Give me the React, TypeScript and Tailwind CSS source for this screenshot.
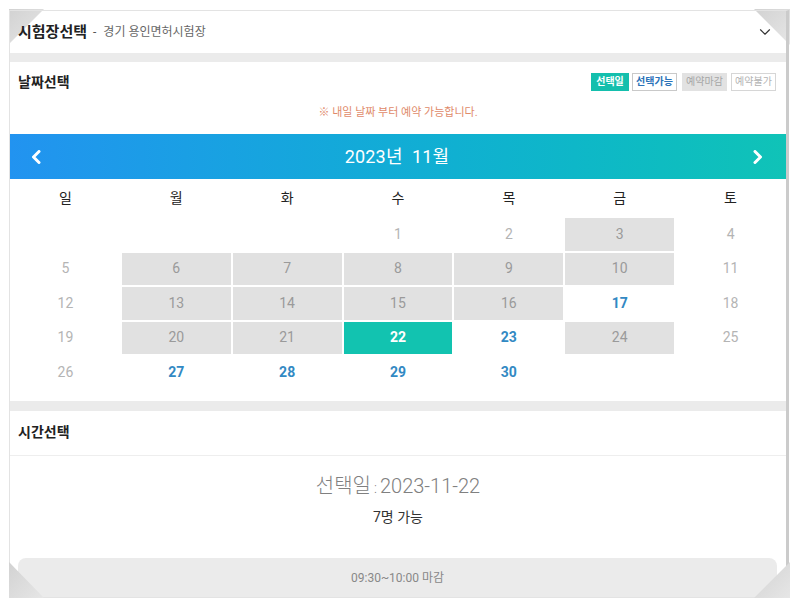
import { ChevronDown } from "lucide-react";

const FONT = "font-['Roboto','Noto_Sans_CJK_KR',sans-serif]";

type DayKind = "empty" | "off" | "closed" | "open" | "selected";

interface Day {
  n?: number;
  kind: DayKind;
}

const weekdays = ["일", "월", "화", "수", "목", "금", "토"];

const closed = [3, 6, 7, 8, 9, 10, 13, 14, 15, 16, 20, 21, 24];
const open = [17, 23, 27, 28, 29, 30];

function buildDays(): Day[] {
  const days: Day[] = [];
  for (let i = 0; i < 3; i++) days.push({ kind: "empty" });
  for (let n = 1; n <= 30; n++) {
    let kind: DayKind = "off";
    if (n === 22) kind = "selected";
    else if (closed.includes(n)) kind = "closed";
    else if (open.includes(n)) kind = "open";
    days.push({ n, kind });
  }
  while (days.length < 35) days.push({ kind: "empty" });
  return days;
}

function DayCell({ day }: { day: Day }) {
  const styles: Record<DayKind, string> = {
    empty: "",
    off: "text-[#b4b4b4]",
    closed: "bg-[#e1e1e1] text-[#9a9a9a]",
    open: "text-[#3289c3] font-bold",
    selected: "bg-[#12c3b0] text-white font-bold",
  };
  return (
    <div className="h-[34.5px] p-px">
      <div className={`h-full flex items-center justify-center text-[14px] ${styles[day.kind]}`}>
        {day.n}
      </div>
    </div>
  );
}

function Corner({ className, points }: { className: string; points: string }) {
  return (
    <svg className={`absolute ${className}`} width="36" height="36" viewBox="0 0 36 36">
      <defs>
        <linearGradient id="fold" x1="0" y1="0" x2="1" y2="1">
          <stop offset="0" stopColor="#d2d2d2" />
          <stop offset="1" stopColor="#e6e6e6" />
        </linearGradient>
      </defs>
      <polygon points={points} fill="url(#fold)" />
    </svg>
  );
}

export default function App() {
  const days = buildDays();

  return (
    <div className={`relative w-[800px] h-[603px] bg-white overflow-hidden ${FONT}`}>
      {/* folded corners behind the top edge */}
      <Corner className="left-[9px] top-[9px] z-0" points="0,0 35,0 0,35" />
      <Corner className="left-[754px] top-[9px] z-0" points="0,0 36,0 36,36" />

      <div className="relative z-10 pt-[10px] pl-[9px]">
        <div className="w-[780px] h-[588px] border-l border-t border-b border-[#e3e3e3] border-r-[3px] border-r-[#cbcbcb] overflow-hidden">
          {/* 시험장 */}
          <div className="h-[42px] flex items-center pl-[8px] pr-[12px]">
            <span className="text-[15px] font-bold text-[#222]">시험장선택</span>
            <span className="ml-[6px] text-[12px] text-[#555]">-</span>
            <span className="ml-[7px] text-[12px] text-[#666]">경기 용인면허시험장</span>
            <ChevronDown className="ml-auto" size={18} strokeWidth={1.5} color="#333" />
          </div>
          <div className="h-[9px] bg-[#ebebeb]" />

          {/* 날짜선택 */}
          <div className="pt-[11px]">
            <div className="flex items-center justify-between pl-[8px] pr-[10px] h-[18px]">
              <span className="text-[14px] font-bold text-[#222]">날짜선택</span>
              <div className="flex gap-[3px] text-[10px] leading-none">
                <span className="w-[38px] h-[18px] flex items-center justify-center bg-[#14bfad] text-white font-bold">선택일</span>
                <span className="w-[45px] h-[18px] flex items-center justify-center border border-[#c9c9c9] text-[#2a72b8] font-bold">선택가능</span>
                <span className="ml-[2px] w-[45px] h-[18px] flex items-center justify-center bg-[#e2e2e2] text-[#a6a6a6]">예약마감</span>
                <span className="ml-[1px] w-[45px] h-[18px] flex items-center justify-center border border-[#d6d6d6] text-[#b3b3b3]">예약불가</span>
              </div>
            </div>
            <p className="mt-[14px] text-center text-[11px] leading-[16px] text-[#e08a6a]">※ 내일 날짜 부터 예약 가능합니다.</p>

            <div className="mt-[13px] h-[45px] bg-linear-to-r from-[#2293f0] to-[#10c3b7] flex items-center justify-between pl-[20px] pr-[22px]">
              <svg width="12" height="14" viewBox="0 0 12 14">
                <polyline points="9,1.5 3.5,7 9,12.5" fill="none" stroke="white" strokeWidth="3" strokeLinejoin="round" strokeLinecap="round" />
              </svg>
              <span className="text-[18px] text-white tracking-[0.2px]">2023년&nbsp; 11월</span>
              <svg width="12" height="14" viewBox="0 0 12 14">
                <polyline points="3,1.5 8.5,7 3,12.5" fill="none" stroke="white" strokeWidth="3" strokeLinejoin="round" strokeLinecap="round" />
              </svg>
            </div>

            <div className="grid grid-cols-7 h-[38px] items-center">
              {weekdays.map((w) => (
                <div key={w} className="text-center text-[14px] text-[#222]">{w}</div>
              ))}
            </div>
            <div className="grid grid-cols-7 pb-[11px]">
              {days.map((d, i) => (
                <DayCell key={i} day={d} />
              ))}
            </div>
          </div>
          <div className="h-[10px] bg-[#ebebeb]" />

          {/* 시간선택 */}
          <div className="h-[45px] flex items-center pl-[8px] border-b border-[#eeeeee]">
            <span className="text-[14px] font-bold text-[#222]">시간선택</span>
          </div>
          <div className="flex flex-col items-center">
            <p className="mt-[16px] text-[20px] leading-[28px] font-light text-[#808080]">
              선택일<span className="text-[14px] mx-[3px]">:</span>2023-11-22
            </p>
            <p className="mt-[5px] text-[14px] leading-[20px] font-normal text-[#333]">7명 가능</p>
          </div>
          <div className="mt-[31px] ml-[8px] mr-[9px] h-[40px] rounded-[8px] bg-[#ebebeb] flex items-center justify-center text-[12px] text-[#888]">
            09:30~10:00 마감
          </div>
        </div>
      </div>

      {/* folded corners over the bottom edge */}
      <Corner className="left-[9px] top-[562px] z-20" points="0,0 0,36 35,36" />
      <Corner className="left-[754px] top-[562px] z-20" points="0,36 36,0 36,36" />
    </div>
  );
}
